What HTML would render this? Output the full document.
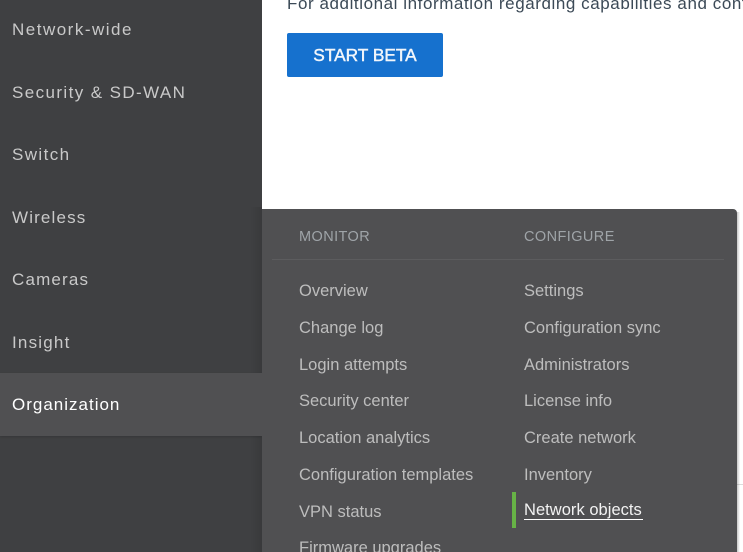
<!DOCTYPE html>
<html>
<head>
<meta charset="utf-8">
<style>
html,body{margin:0;padding:0;background:#fff;overflow:hidden;}
body{width:743px;height:552px;position:relative;font-family:"Liberation Sans",sans-serif;}
#stage{position:absolute;left:0;top:0;width:743px;height:552px;overflow:hidden;}
.abs{position:absolute;white-space:nowrap;}
#side{position:absolute;left:0;top:0;width:262px;height:552px;background:#3f4042;}
#shade{position:absolute;left:250px;top:207px;width:12px;height:345px;background:linear-gradient(to right,rgba(0,0,0,0),rgba(0,0,0,.1));}
#active{position:absolute;left:0;top:373px;width:262px;height:63px;background:#505052;box-shadow:0 1px 2px rgba(0,0,0,.15);}
.nav{position:absolute;left:12px;height:24px;line-height:24px;font-size:17px;color:#c9c9c9;white-space:nowrap;}
#fly{position:absolute;left:262px;top:209px;width:475px;height:343px;background:#505052;border-top-right-radius:4px;}
#flyshadow{position:absolute;left:737px;top:212px;width:3px;height:340px;background:linear-gradient(to right,rgba(0,0,0,.22),rgba(0,0,0,0));}
#rule{position:absolute;left:272px;top:259px;width:452px;height:1px;background:#5c5c5e;}
.h{position:absolute;height:20px;line-height:20px;font-size:14.5px;letter-spacing:.42px;color:#9fa4a8;white-space:nowrap;}
.i{position:absolute;height:22px;line-height:22px;font-size:16.5px;color:#bdbdbd;white-space:nowrap;}
#btn{position:absolute;left:287px;top:33px;width:156px;height:44px;background:#1671ce;border-radius:2px;color:#f2f6fb;font-size:17.3px;line-height:45px;text-align:center;-webkit-text-stroke:.45px #f2f6fb;}
#topclip{position:absolute;left:287px;top:0;width:456px;height:20px;overflow:hidden;}
#top{position:absolute;left:0;top:-6px;height:20px;line-height:20px;font-size:17px;letter-spacing:.57px;color:#3c4a57;white-space:nowrap;}
</style>
</head>
<body>
<div id="stage">
<div id="topclip"><div id="top">For additional information regarding capabilities and conf</div></div>
<div id="btn">START BETA</div>
<div class="abs" style="left:737px;top:484px;width:6px;height:1px;background:#dcdcdc;"></div>

<div id="side"></div>
<div id="shade"></div>
<div id="active"></div>
<div class="nav" style="top:18px;letter-spacing:1.5px;">Network-wide</div>
<div class="nav" style="top:81px;letter-spacing:1.4px;">Security &amp; SD-WAN</div>
<div class="nav" style="top:143px;letter-spacing:1.4px;">Switch</div>
<div class="nav" style="top:206px;letter-spacing:1.15px;">Wireless</div>
<div class="nav" style="top:268px;letter-spacing:1.17px;">Cameras</div>
<div class="nav" style="top:331px;letter-spacing:1.2px;">Insight</div>
<div class="nav" style="top:393px;letter-spacing:1px;color:#fff;">Organization</div>

<div id="fly"></div>
<div id="flyshadow"></div>
<div id="rule"></div>
<div class="h" style="left:299px;top:227px;">MONITOR</div>
<div class="h" style="left:524px;top:227px;">CONFIGURE</div>

<div class="i" style="left:299px;top:280px;">Overview</div>
<div class="i" style="left:299px;top:317px;">Change log</div>
<div class="i" style="left:299px;top:354px;">Login attempts</div>
<div class="i" style="left:299px;top:390px;">Security center</div>
<div class="i" style="left:299px;top:427px;">Location analytics</div>
<div class="i" style="left:299px;top:464px;">Configuration templates</div>
<div class="i" style="left:299px;top:501px;">VPN status</div>
<div class="i" style="left:299px;top:530px;height:22px;overflow:hidden;width:160px;"><span style="position:absolute;left:0;top:7px;">Firmware upgrades</span></div>

<div class="i" style="left:524px;top:280px;">Settings</div>
<div class="i" style="left:524px;top:317px;">Configuration sync</div>
<div class="i" style="left:524px;top:354px;">Administrators</div>
<div class="i" style="left:524px;top:390px;">License info</div>
<div class="i" style="left:524px;top:427px;">Create network</div>
<div class="i" style="left:524px;top:464px;">Inventory</div>
<div class="abs" style="left:512px;top:492px;width:4px;height:36px;background:#67b346;"></div>
<div class="i" style="left:524px;top:499px;color:#f2f2f2;letter-spacing:.03px;">Network objects</div>
<div class="abs" style="left:524px;top:519px;width:119px;height:1px;background:#fff;"></div>
</div>
</body>
</html>
